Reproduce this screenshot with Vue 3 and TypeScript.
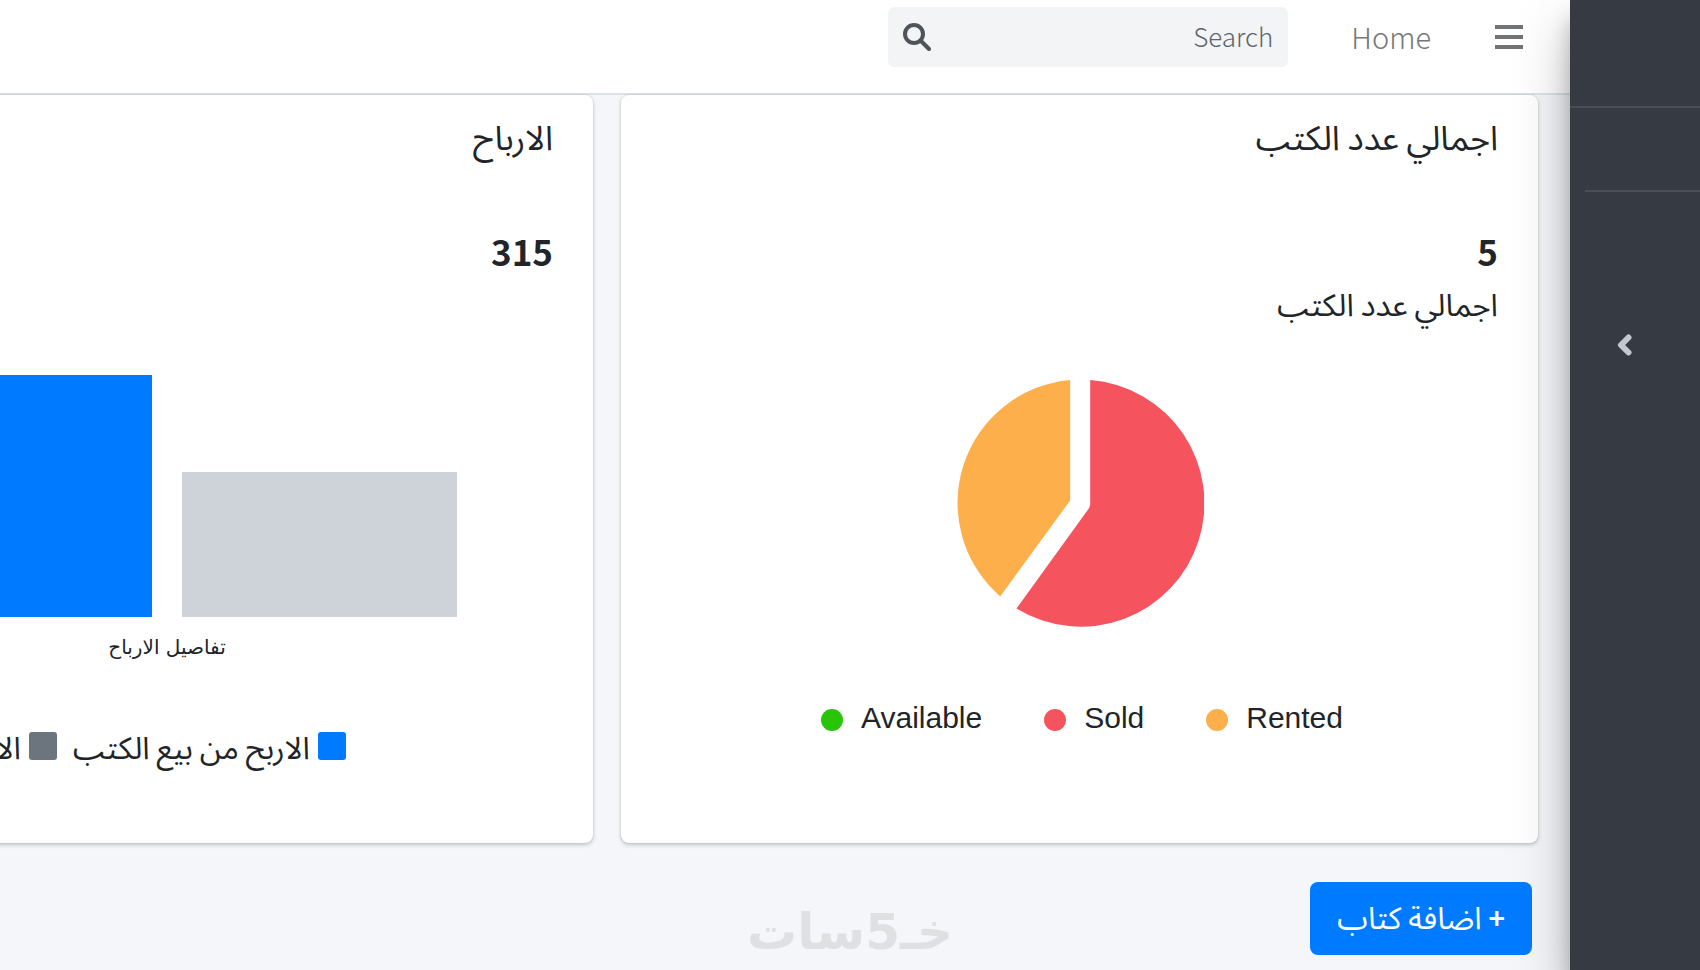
<script setup lang="ts">
import { ref } from 'vue'

interface Entry {
  label: string
  color: string
}

interface Bar {
  color: string
  height: number
}

const query = ref('')

const bookStates: Entry[] = [
  { label: 'Available', color: '#28c508' },
  { label: 'Sold', color: '#f5545f' },
  { label: 'Rented', color: '#fdaf4b' },
]

const bars: Bar[] = [
  { color: '#ced3da', height: 60 },
  { color: '#007bff', height: 100 },
]

const profitSources: Entry[] = [
  { label: 'الاربح من بيع الكتب', color: '#007bff' },
  { label: 'الاربح من تأجير الكتب', color: '#6c757d' },
]
</script>

<template>
  <div class="app" dir="rtl">
    <aside class="sidebar">
      <div class="brand"></div>
      <div class="user"></div>
      <button class="expand" type="button" aria-label="توسيع القائمة">
        <svg viewBox="0 0 16 24" width="16" height="24"><path d="M11.500 4.500 4 12l7.500 7.500" /></svg>
      </button>
    </aside>

    <main class="main">
      <header class="topbar">
        <button class="menu" type="button" aria-label="القائمة">
          <svg viewBox="0 0 28 26" width="28" height="26">
            <path d="M0 3h28M0 13h28M0 23h28" />
          </svg>
        </button>
        <a class="home" href="#">Home</a>
        <form class="search" role="search" @submit.prevent>
          <input v-model="query" type="search" placeholder="Search" aria-label="Search" />
          <button type="submit" aria-label="بحث">
            <svg viewBox="0 0 28 28" width="28" height="28">
              <circle cx="11" cy="11" r="9" />
              <path d="m18 18 8 8" />
            </svg>
          </button>
        </form>
      </header>

      <div class="content">
        <div class="cards">
          <section class="card">
            <h2>اجمالي عدد الكتب</h2>
            <p class="value">5</p>
            <p class="caption">اجمالي عدد الكتب</p>
            <svg class="pie" viewBox="0 0 248 248" role="img" aria-label="اجمالي عدد الكتب">
              <path fill="#fdaf4b" d="M114.200 1V121.400L44.200 217.400A123.500 123.500 0 0 1 114.200 1Z" />
              <path
                fill="#f5545f"
                d="M134.200 1A123.500 123.500 0 1 1 60.500 229.500L132.800 129.500Q134.200 127.500 134.200 125Z"
              />
            </svg>
            <ul class="states" dir="ltr">
              <li v-for="state in bookStates" :key="state.label">
                <span class="dot" :style="{ background: state.color }"></span>{{ state.label }}
              </li>
            </ul>
          </section>

          <section class="card">
            <h2>الارباح</h2>
            <p class="value">315</p>
            <figure class="chart">
              <div class="plot">
                <div
                  v-for="bar in bars"
                  :key="bar.color"
                  class="bar"
                  :style="{ background: bar.color, height: bar.height + '%' }"
                ></div>
              </div>
              <figcaption>تفاصيل الارباح</figcaption>
            </figure>
            <ul class="sources">
              <li v-for="source in profitSources" :key="source.label">
                <span class="square" :style="{ background: source.color }"></span>{{ source.label }}
              </li>
            </ul>
          </section>
        </div>

        <div class="actions">
          <button class="add" type="button"><b>+</b> اضافة كتاب</button>
        </div>
      </div>

      <div class="watermark">خـ5سات</div>
    </main>
  </div>
</template>

<style>
html,
body {
  margin: 0;
  overflow: hidden;
}
</style>

<style scoped>
.app {
  display: flex;
  height: 100vh;
  overflow: hidden;
  background: #f4f6f9;
  color: #212529;
  font-family: 'Noto Sans CJK SC', 'Noto Sans Arabic', 'Noto Sans', 'DejaVu Sans', sans-serif;
  font-size: 31px;
}

.app *,
.app {
  box-sizing: border-box;
}

button {
  border: 0;
  padding: 0;
  background: none;
  font: inherit;
  cursor: pointer;
}

svg {
  display: block;
  fill: none;
}

.sidebar {
  flex: 0 0 130px;
  z-index: 1;
  background: #363a42;
  box-shadow: 0 28px 56px rgba(0, 0, 0, 0.25), 0 20px 20px rgba(0, 0, 0, 0.22);
  direction: ltr;
}

.brand {
  height: 108px;
  border-bottom: 2px solid #4b4d57;
}

.user {
  height: 84px;
  margin-left: 15px;
  border-bottom: 2px solid #4b4d57;
}

.expand {
  display: block;
  margin: 141px 0 0 47px;
}

.expand path {
  stroke: #c2c7d0;
  stroke-width: 6;
  stroke-linecap: round;
  stroke-linejoin: round;
}

.main {
  position: relative;
  flex: 1;
  min-width: 0;
}

.topbar {
  display: flex;
  height: 95px;
  padding: 6px 47px 26px;
  border-bottom: 2px solid #dee2e6;
  background: #fff;
  align-items: center;
}

.menu path {
  stroke: #707274;
  stroke-width: 4;
}

.home {
  margin-inline-start: 64px;
  padding-bottom: 2px;
  color: #777;
  font-size: 29px;
  font-weight: 300;
  line-height: 58px;
  text-decoration: none;
}

.search {
  display: flex;
  width: 400px;
  height: 60px;
  margin-inline-start: 63px;
  padding: 0 15px;
  border-radius: 6px;
  background: #f2f4f6;
  align-items: center;
}

.search input {
  flex: 1;
  height: 100%;
  min-width: 0;
  border: 0;
  padding: 0 0 2px;
  outline: 0;
  background: none;
  color: #495057;
  font: inherit;
  font-size: 26px;
  font-weight: 300;
}

.search input::placeholder {
  color: #5c646b;
  opacity: 1;
}

.search svg {
  stroke: #50545a;
  stroke-width: 4;
  stroke-linecap: round;
}

.content {
  padding-right: 32px;
}

.cards {
  display: grid;
  grid-template-columns: 1fr 1fr;
  gap: 28px;
  margin-left: -324px;
}

.card {
  height: 748px;
  padding: 16px 40px;
  border-radius: 8px;
  background: #fff;
  box-shadow: 0 0 2px rgba(0, 0, 0, 0.14), 0 2px 4px rgba(0, 0, 0, 0.2);
}

h2,
p,
figure,
ul {
  margin: 0;
  padding: 0;
  font-weight: 400;
  list-style: none;
}

h2 {
  height: 114px;
  font-size: 34px;
  line-height: 50px;
}

.value {
  font-size: 35px;
  font-weight: 700;
  line-height: 52px;
}

.caption {
  line-height: 52px;
}

.pie {
  width: 248px;
  margin: 50px auto 0;
}

.states {
  display: flex;
  margin-top: 71px;
  padding-left: 5px;
  gap: 62px;
  justify-content: center;
  font-family: 'Liberation Sans', Arial, sans-serif;
  font-size: 30px;
  line-height: 40px;
}

.states li {
  display: flex;
  gap: 18px;
  align-items: center;
}

.dot {
  width: 22px;
  height: 22px;
  margin-top: 4px;
  border-radius: 50%;
}

.chart {
  width: calc(70% - 6px);
  margin: 98px 96px 0 0;
}

.plot {
  display: flex;
  height: 242px;
  gap: 30px;
  align-items: flex-end;
}

.bar {
  flex: 1;
}

figcaption {
  margin-top: 14px;
  font-family: 'DejaVu Sans', sans-serif;
  font-size: 20px;
  line-height: 32px;
  text-align: center;
}

.sources {
  display: flex;
  margin: 58px 207px 0 0;
  gap: 16px;
  white-space: nowrap;
  line-height: 50px;
}

.sources li {
  display: flex;
  gap: 8px;
  align-items: center;
}

.square {
  width: 28px;
  height: 28px;
  border-radius: 3px;
}

.actions {
  padding: 39px 6px 0 0;
}

.add {
  height: 73px;
  padding: 0 27px;
  border-radius: 8px;
  background: #007bff;
  color: #fff;
}

.add b {
  font-size: 28px;
}

.watermark {
  position: absolute;
  bottom: 2px;
  left: 747px;
  color: #dfe0e2;
  font-family: 'DejaVu Sans', sans-serif;
  font-size: 50px;
  font-weight: 700;
  line-height: 72px;
}
</style>
